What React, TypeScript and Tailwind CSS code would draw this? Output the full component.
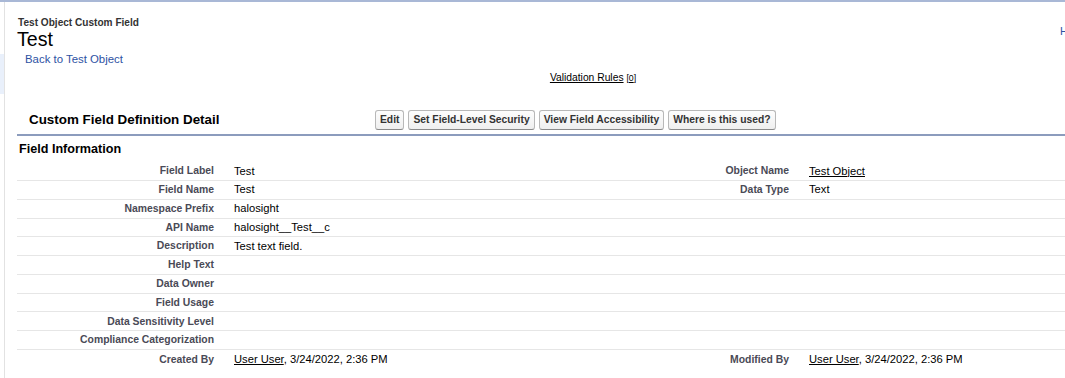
import type { ReactNode } from 'react';

type Fila = {
  etiqueta: string;
  valor?: ReactNode;
  etiqueta2?: string;
  valor2?: ReactNode;
};

const usuario = (
  <>
    <a className="underline text-black">User User</a>, 3/24/2022, 2:36 PM
  </>
);

const filas: Fila[] = [
  { etiqueta: 'Field Label', valor: 'Test', etiqueta2: 'Object Name', valor2: <a className="underline text-black">Test Object</a> },
  { etiqueta: 'Field Name', valor: 'Test', etiqueta2: 'Data Type', valor2: 'Text' },
  { etiqueta: 'Namespace Prefix', valor: 'halosight' },
  { etiqueta: 'API Name', valor: 'halosight__Test__c' },
  { etiqueta: 'Description', valor: 'Test text field.' },
  { etiqueta: 'Help Text' },
  { etiqueta: 'Data Owner' },
  { etiqueta: 'Field Usage' },
  { etiqueta: 'Data Sensitivity Level' },
  { etiqueta: 'Compliance Categorization' },
  { etiqueta: 'Created By', valor: usuario, etiqueta2: 'Modified By', valor2: usuario },
];

const botones = ['Edit', 'Set Field-Level Security', 'View Field Accessibility', 'Where is this used?'];

export default function App() {
  return (
    <div className="relative h-[378px] w-[1065px] overflow-hidden bg-white font-['Liberation_Sans',Arial,sans-serif] text-black">
      <div className="h-[2px] bg-[#a9b8d6]" />
      <div className="flex">
        {/* barra lateral colapsada */}
        <div className="w-[5px] shrink-0 border-r border-[#e2e2e2] h-[376px]">
          <div className="mt-[52px] h-[40px] bg-[#e9f0fb]" />
        </div>

        <div className="w-[1164px] shrink-0 pl-[12px]">
          {/* encabezado */}
          <div className="relative pt-[15px]">
            <p className="ml-[1px] text-[10.1px] leading-[12px] font-bold text-[#333]">Test Object Custom Field</p>
            <h1 className="text-[19.6px] leading-[20px] text-black">Test</h1>
            <a className="ml-[8px] mt-[3px] block text-[11.4px] leading-[14px] text-[#2d52a3]">Back to Test Object</a>
            <a className="absolute left-[1043px] top-[21px] whitespace-nowrap text-[11px] text-[#2d52a3]">Help for this Page</a>
          </div>

          <div className="mt-[6px] text-center text-[10.3px] leading-[12px]">
            <a className="underline">Validation Rules</a> <span className="text-[8.7px]">[<span className="underline">0</span>]</span>
          </div>

          {/* bloque de detalle */}
          <div className="mt-[26px] w-[1150px]">
            <div className="flex items-center border-b-2 border-[#8c9cbd] pb-[4px]">
              <h2 className="w-[358px] shrink-0 pl-[12px] text-[13.4px] font-bold">Custom Field Definition Detail</h2>
              <div className="flex gap-[4px]">
                {botones.map((b) => (
                  <button
                    key={b}
                    className="rounded-[3px] border border-[#b8b8b8] border-b-[#8a8a8a] bg-linear-to-b from-[#fdfdfd] to-[#efefef] px-[4px] py-[3px] text-[10.3px] leading-[12px] font-bold text-[#333]"
                  >
                    {b}
                  </button>
                ))}
              </div>
            </div>

            <h3 className="pl-[2px] pt-[5px] pb-[5px] text-[12.6px] leading-[16px] font-bold">Field Information</h3>

            <div>
              {filas.map((f, i) => (
                <div
                  key={f.etiqueta}
                  className={`grid h-[18.8px] grid-cols-[207px_368px_207px_368px] items-center ${i < filas.length - 1 ? 'border-b border-[#e6e6e6]' : ''}`}
                >
                  <div className="pr-[10px] text-right text-[10.4px] font-bold text-[#4a4a56]">{f.etiqueta}</div>
                  <div className="pl-[10px] text-[11.2px]">{f.valor}</div>
                  <div className="pr-[10px] text-right text-[10.4px] font-bold text-[#4a4a56]">{f.etiqueta2}</div>
                  <div className="pl-[10px] text-[11.2px]">{f.valor2}</div>
                </div>
              ))}
            </div>
          </div>
        </div>
      </div>
    </div>
  );
}
